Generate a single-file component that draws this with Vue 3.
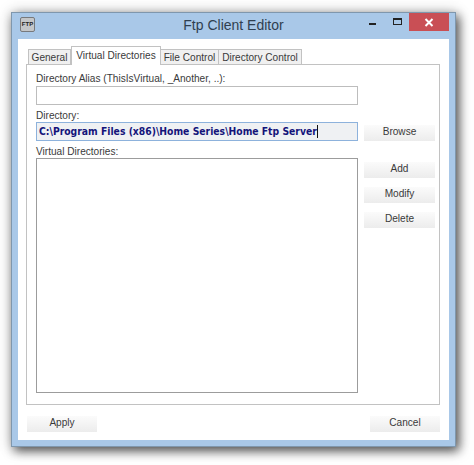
<template>
  <div class="page">
    <div class="window">
      <div class="titlebar">
        <div class="title-left">
          <div class="app-icon">FTP</div>
        </div>
        <div class="title">Ftp Client Editor</div>
        <div class="controls">
          <div class="minimize"></div>
          <div class="maximize"></div>
          <div class="close">
            <svg width="10" height="9" viewBox="0 0 10 9">
              <path d="M1.5 1 L8.5 8 M8.5 1 L1.5 8" stroke="#fff" stroke-width="2" fill="none" />
            </svg>
          </div>
        </div>
      </div>
      <div class="client">
        <div class="tabs">
          <div v-for="tab in tabs" :key="tab.name" class="tab" :class="{ active: tab.active }" :style="{ width: tab.width + 'px' }">{{ tab.name }}</div>
        </div>
        <div class="pane">
          <div class="form">
            <label class="first">Directory Alias (ThisIsVirtual, _Another, ..):</label>
            <div class="input"></div>
            <label>Directory:</label>
            <div class="input path"><span>{{ path }}</span><i class="caret"></i></div>
            <label class="list-label">Virtual Directories:</label>
            <div class="list"></div>
          </div>
          <div class="side">
            <button class="btn browse">Browse</button>
            <button class="btn add">Add</button>
            <button class="btn">Modify</button>
            <button class="btn">Delete</button>
          </div>
        </div>
        <div class="footer">
          <button class="btn wide">Apply</button>
          <button class="btn wide">Cancel</button>
        </div>
      </div>
    </div>
  </div>
</template>

<script setup>
const path = 'C:\\Program Files (x86)\\Home Series\\Home Ftp Server';

const tabs = [
  { name: 'General', width: 43 },
  { name: 'Virtual Directories', width: 90, active: true },
  { name: 'File Control', width: 58 },
  { name: 'Directory Control', width: 83 }
];
</script>

<style>
html, body {
  background: #fff;
}
</style>

<style scoped>
.page {
  width: 474px;
  height: 465px;
  padding: 12px 0 0 11px;
  box-sizing: border-box;
  overflow: hidden;
  font-family: "Liberation Sans", sans-serif;
  font-size: 10.1px;
  color: #3a3a3a;
}
.window {
  width: 445px;
  height: 435px;
  box-sizing: border-box;
  background: #a9c8e8;
  border: 1px solid #7f97ad;
  box-shadow: 3px 4px 10px rgba(0, 0, 0, 0.65), 0 0 14px rgba(0, 0, 0, 0.2);
  display: flex;
  flex-direction: column;
}
.titlebar {
  height: 26px;
  display: grid;
  grid-template-columns: 1fr auto 1fr;
  align-items: start;
}
.title-left {
  padding: 4px 0 0 8px;
}
.app-icon {
  width: 15px;
  height: 15px;
  box-sizing: border-box;
  border: 1px solid #77797c;
  border-radius: 2px;
  background: #c4c6c8;
  color: #222;
  font-size: 6px;
  font-weight: 700;
  line-height: 13px;
  text-align: center;
}
.title {
  font-size: 14px;
  line-height: 24px;
  color: #2f3f50;
}
.controls {
  display: flex;
  justify-content: flex-end;
  align-items: flex-start;
  padding-right: 6px;
}
.minimize {
  width: 7px;
  height: 2px;
  background: #222;
  margin: 10px 17px 0 0;
}
.maximize {
  width: 9px;
  height: 7px;
  box-sizing: border-box;
  border: 1px solid #222;
  border-top-width: 2px;
  margin: 5px 7px 0 0;
}
.close {
  width: 40px;
  height: 18px;
  background: #c94f55;
  display: flex;
  align-items: center;
  justify-content: center;
}
.client {
  margin: 0 6px 6px;
  flex: 1;
  background: #fff;
  padding: 7px 9px 0 8px;
}
.tabs {
  display: flex;
  align-items: flex-end;
  height: 18px;
  padding-left: 2px;
  position: relative;
  z-index: 1;
}
.tab {
  height: 15px;
  box-sizing: border-box;
  border: 1px solid #c2c2c2;
  border-bottom: none;
  border-left: none;
  background: #f0f0f0;
  line-height: 15px;
  text-align: center;
  white-space: nowrap;
}
.tab:first-child {
  border-left: 1px solid #c2c2c2;
}
.tab.active {
  height: 19px;
  margin-bottom: -1px;
  background: #fff;
  border-left: 1px solid #c2c2c2;
  line-height: 15px;
  padding-top: 1px;
}
.pane {
  height: 341px;
  box-sizing: border-box;
  border: 1px solid #c2c2c2;
  padding: 6px 4px 0 9px;
  display: flex;
  gap: 6px;
}
.form {
  width: 322px;
}
label {
  display: block;
  height: 13px;
  line-height: 13px;
  margin-top: 4px;
}
label.first {
  margin-top: 1px;
}
.input {
  height: 19px;
  box-sizing: border-box;
  border: 1px solid #bdbdbd;
  margin-top: 0;
}
label.first + .input {
  margin-top: 1px;
}
.path {
  background: #eff1f3;
  border-color: #8db2dc;
  color: #14147a;
  font-family: "DejaVu Sans Condensed", "DejaVu Sans", sans-serif;
  font-stretch: condensed;
  font-weight: 700;
  font-size: 10.3px;
  line-height: 17px;
  padding-left: 2px;
  white-space: nowrap;
  display: flex;
  align-items: center;
}
.caret {
  width: 1px;
  height: 13px;
  background: #111;
}
.list {
  height: 235px;
  box-sizing: border-box;
  border: 1px solid #9c9c9c;
}
.side {
  width: 71px;
  display: flex;
  flex-direction: column;
  gap: 9px;
}
.btn {
  width: 71px;
  height: 16px;
  box-sizing: border-box;
  padding: 0 0 2px;
  border: none;
  background: linear-gradient(#fbfbfb, #ececec);
  font: inherit;
  color: #3a3a3a;
  line-height: 14px;
}
.browse {
  margin-top: 54px;
}
.add {
  margin-top: 12px;
}
.footer {
  display: flex;
  justify-content: space-between;
  padding: 11px 0 0 1px;
}
.wide {
  width: 70px;
}
</style>
